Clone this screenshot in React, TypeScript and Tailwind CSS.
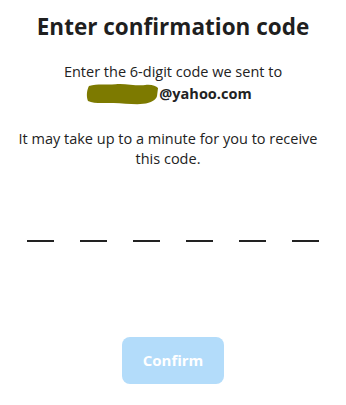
import React from "react";

const Redaction = () => (
    <svg width="73" height="24" viewBox="0 0 74 24" className="inline-block align-[-7px]">
        <path
            d="M3 4 C12 1 20 3 30 2 C40 1 50 4 60 3 C66 2 71 4 73 6 L72 14 C71 18 66 21 58 22 C48 23 38 21 28 21 C18 21 8 22 2 19 C0 14 1 8 3 4 Z"
            fill="#7d7a00"
        />
    </svg>
);

export default function App() {
    const slots = [0, 1, 2, 3, 4, 5];

    return (
        <section className="w-[346px] h-[405px] bg-white flex flex-col items-center text-[#222] font-['Open_Sans','Noto_Sans',sans-serif]">
            <h1 className="mt-[10px] text-[22.5px] leading-[34px] font-bold text-[#1f1f1f]">Enter confirmation code</h1>

            <div className="mt-[18px] text-center text-[14.5px] leading-[20px]">
                <p>Enter the 6-digit code we sent to</p>
                <p className="font-bold pr-[8px]">
                    <Redaction />@yahoo.com
                </p>
            </div>

            <p className="mt-[23px] pl-[12px] pr-[22px] text-center text-[14.5px] leading-[20px]">
                It may take up to a minute for you to receive this code.
            </p>

            <div className="mt-[71px] flex gap-[26px]">
                {slots.map((i) => (
                    <div key={i} className="w-[27px] h-[2px] bg-[#222]" />
                ))}
            </div>

            <button
                disabled
                className="mt-[95px] w-[102px] h-[47px] rounded-lg bg-[#b3dcfa] text-white font-bold text-[15px]"
            >
                Confirm
            </button>
        </section>
    );
}
